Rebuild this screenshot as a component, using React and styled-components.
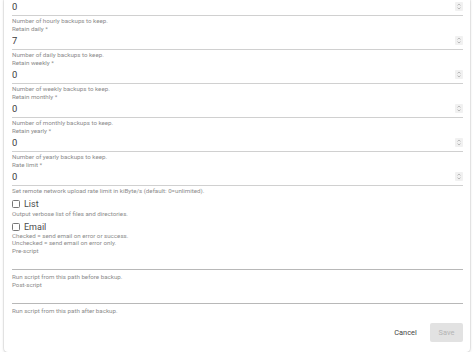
import styled, { createGlobalStyle } from "styled-components";

const GlobalStyle = createGlobalStyle`
    html, body {
        margin: 0;
        padding: 0;
        background: #fff;
        font-family: Roboto, "Liberation Sans", sans-serif;
        overflow: hidden;
    }
`

const Card = styled.form`
    box-sizing: border-box;
    width: 466px;
    margin: -1px 0 0 4px;
    padding: 0 7px 10px 8px;
    background: #fff;
    border-radius: 0 0 4px 4px;
    box-shadow: 0 1px 3px rgba(0, 0, 0, 0.18), 0 0 0 1px rgba(0, 0, 0, 0.05);
    display: flex;
    flex-direction: column;
`

const Label = styled.label`
    display: block;
    font-size: 6.2px;
    line-height: 8px;
    color: #8a8a8a;
    white-space: nowrap;
`

const InputRow = styled.div`
    display: flex;
    align-items: center;
    height: ${p => p.$tall ? "16px" : "14px"};
    border-bottom: 1px solid ${p => p.$dark ? "#b8b8b8" : "#d0d0d0"};
`

const Input = styled.input`
    flex: 1;
    min-width: 0;
    border: none;
    outline: none;
    background: transparent;
    padding: 0;
    margin: 0;
    height: 14px;
    font-family: inherit;
    font-size: 9.4px;
    color: #3a3a3a;
    align-self: flex-start;
`

const Spinner = styled.svg`
    flex: none;
    width: 8px;
    height: 9px;
    margin-top: -2px;
`

const Helper = styled.div`
    margin-top: ${p => p.$gap ?? 1}px;
    font-size: 6.2px;
    line-height: ${p => p.$tight ? "7px" : "8px"};
    color: #8c8c8c;
    white-space: nowrap;
`

const CheckRow = styled.label`
    margin-top: 2px;
    height: 13px;
    display: flex;
    align-items: center;
    gap: 4px;
    font-size: 9px;
    color: #4a4a4a;
`

const Box = styled.span`
    box-sizing: border-box;
    width: 8px;
    height: 8px;
    border: 1px solid #777;
    border-radius: 1.5px;
`

const Actions = styled.div`
    margin-top: 8px;
    display: flex;
    justify-content: flex-end;
    gap: 8px;
`

const Button = styled.button`
    width: 33px;
    height: 19px;
    padding: 0;
    border: none;
    border-radius: 2px;
    font-family: inherit;
    font-size: 7.4px;
    background: ${p => p.$disabled ? "#e2e2e2" : "transparent"};
    color: ${p => p.$disabled ? "#b4b4b4" : "#444"};
`

const SpinIcon = () => (
    <Spinner viewBox="0 0 8 9">
        <rect x="0" y="0" width="8" height="9" rx="1" fill="#f1f1f1" />
        <path d="M2.5 3.4 L4 2 L5.5 3.4 M2.5 5.6 L4 7 L5.5 5.6" fill="none" stroke="#a0a0a0" strokeWidth="0.7" />
    </Spinner>
)

const NumberField = ({ label, value, helper }) => (
    <div>
        {label && <Label>{label} *</Label>}
        <InputRow $tall>
            <Input defaultValue={value} readOnly />
            <SpinIcon />
        </InputRow>
        <Helper>{helper}</Helper>
    </div>
)

const TextField = ({ label, helper }) => (
    <div>
        <Label>{label}</Label>
        <InputRow $dark>
            <Input defaultValue="" readOnly />
        </InputRow>
        <Helper $gap={3}>{helper}</Helper>
    </div>
)

// the hourly field is scrolled off the top, only its value shows
const fields = [
    { label: null, value: "0", helper: "Number of hourly backups to keep." },
    { label: "Retain daily", value: "7", helper: "Number of daily backups to keep." },
    { label: "Retain weekly", value: "0", helper: "Number of weekly backups to keep." },
    { label: "Retain monthly", value: "0", helper: "Number of monthly backups to keep." },
    { label: "Retain yearly", value: "0", helper: "Number of yearly backups to keep." },
    { label: "Rate limit", value: "0", helper: "Set remote network upload rate limit in kiByte/s (default: 0=unlimited)." },
]

export default function App() {
    return (
        <>
            <GlobalStyle />
            <Card onSubmit={e => e.preventDefault()}>
                {fields.map(f => (<NumberField key={f.helper} {...f} />))}

                <CheckRow><Box /> List</CheckRow>
                <Helper $gap={0}>Output verbose list of files and directories.</Helper>

                <CheckRow><Box /> Email</CheckRow>
                <Helper $gap={0} $tight>
                    Checked = send email on error or success.<br />
                    Unchecked = send email on error only.
                </Helper>

                <TextField label="Pre-script" helper="Run script from this path before backup." />
                <TextField label="Post-script" helper="Run script from this path after backup." />

                <Actions>
                    <Button type="button">Cancel</Button>
                    <Button type="button" $disabled disabled>Save</Button>
                </Actions>
            </Card>
        </>
    )
}
